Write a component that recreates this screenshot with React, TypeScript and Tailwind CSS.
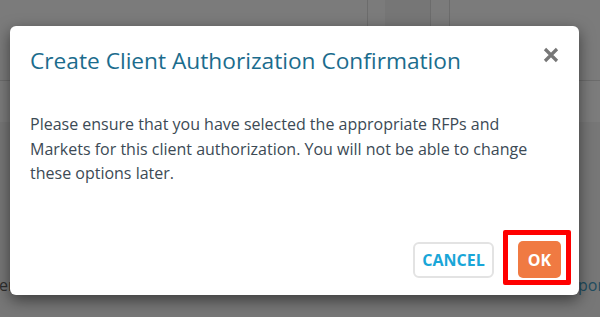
import React from "react";

export default function App() {
  return (
    <div className="relative w-[600px] h-[317px] overflow-hidden bg-[#7b7b7b] font-['Open_Sans',sans-serif]">
      {/* background page (under the overlay) */}
      <div className="flex flex-col h-full">
        <div className="relative h-[81px] border-b border-[#6c6c6c] flex">
          <div className="w-[367px]" />
          <div className="w-[18px] border-l border-[#6c6c6c]" />
          <div className="w-[45px] bg-[#767676]" />
          <div className="w-[19px] border-l border-[#6c6c6c]" />
          <div className="flex-1 border-l border-[#6c6c6c]" />
        </div>
        <div className="h-[41px] bg-[#7c7c7c]" />
        <div className="flex-1 bg-[#777777] flex items-start pt-[153px] justify-between text-[16px] leading-[20px]">
          <span className="text-[#2e2e2e] ml-[-1px]">er</span>
          <span className="text-[#1f4d60] mr-[-4px]">por</span>
        </div>
      </div>

      {/* modal */}
      <div className="absolute left-[10px] top-[26px] w-[569px] h-[269px] bg-white rounded-[6px] shadow-[0_5px_15px_rgba(0,0,0,0.5)] flex flex-col">
        <div className="flex items-start justify-between pl-5 pr-[20px] pt-[19px]">
          <h2 className="text-[22.7px] leading-[31px] text-[#1b6c8d] font-normal">
            Create Client Authorization Confirmation
          </h2>
          <button className="mt-[2px] w-[16px] h-[16px] flex items-center justify-center">
            <svg width="16" height="16" viewBox="0 0 16 16">
              <path d="M2 2 L14 14 M14 2 L2 14" stroke="#777777" strokeWidth="3.2" strokeLinecap="butt" />
            </svg>
          </button>
        </div>
        <p className="pl-5 pr-[44px] mt-[36px] text-[16px] leading-[24.5px] text-[#3c4a55]">
          Please ensure that you have selected the appropriate RFPs and Markets for this client authorization. You will not be able to change these options later.
        </p>
        <div className="mt-auto flex justify-end items-center gap-[24px] pr-[18px] pb-[17px]">
          <button className="w-[81px] h-[36px] rounded-[6px] border-2 border-[#e3e3e3] bg-white text-[#19a6d8] text-[16px] font-bold flex items-center justify-center">
            CANCEL
          </button>
          <div className="relative">
            <button className="w-[43px] h-[37px] rounded-[5px] bg-[#f07a42] text-white text-[16px] font-bold flex items-center justify-center">
              OK
            </button>
            <div className="absolute left-[-15px] right-[-10px] top-[-11px] bottom-[-7px] border-[5px] border-[#ff0000] rounded-[2px] pointer-events-none" />
          </div>
        </div>
      </div>
    </div>
  );
}
